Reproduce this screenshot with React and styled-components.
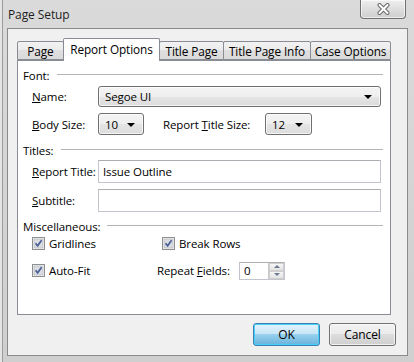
import React from "react";
import styled, { createGlobalStyle } from "styled-components";

const GlobalStyle = createGlobalStyle`
  html, body {
    margin: 0;
    padding: 0;
  }
  body {
    width: 414px;
    height: 362px;
    overflow: hidden;
    background: #d2d2d2;
    font-family: "Open Sans", "Noto Sans", sans-serif;
    font-size: 11.5px;
    letter-spacing: -0.1px;
    color: #000;
  }
`;

const Window = styled.div`
  width: 414px;
  height: 362px;
  box-sizing: border-box;
  display: flex;
  flex-direction: column;
  background: linear-gradient(#dadada, #cfcfcf);
  box-shadow: inset 2px 0 0 #e4e4e4, inset 3px 0 0 #9c9c9c;
`;

const TitleBar = styled.div`
  height: 28px;
  display: flex;
  align-items: flex-start;
  justify-content: space-between;
  padding-left: 8px;
  box-sizing: border-box;

  .title {
    margin-top: 6px;
    font-size: 12px;
    color: #1e1e1e;
  }
`;

const CloseButton = styled.div`
  width: 46px;
  height: 19px;
  margin-right: 8px;
  box-sizing: border-box;
  border: 1px solid #707070;
  border-top: none;
  border-radius: 0 0 4px 4px;
  background: linear-gradient(#efefef, #dcdcdc 55%, #cfcfcf);
  box-shadow: inset 0 0 0 1px rgba(255, 255, 255, 0.6);
  display: flex;
  align-items: center;
  justify-content: center;
`;

const Client = styled.div`
  margin: 0 6px 6px 7px;
  border: 1px solid #8a8a8a;
  background: #f0f0f0;
  padding: 9px 11px 9px 9px;
  display: flex;
  flex-direction: column;
`;

const TabControl = styled.div`
  margin-right: 5px;
  display: flex;
  flex-direction: column;
`;

const TabStrip = styled.div`
  height: 22px;
  display: flex;
  align-items: flex-end;
  position: relative;
  z-index: 1;
`;

const Tab = styled.div`
  width: ${(p) => p.$w}px;
  height: ${(p) => (p.$active ? 23 : 19)}px;
  margin-bottom: ${(p) => (p.$active ? -1 : 0)}px;
  box-sizing: border-box;
  border: 1px solid #898c95;
  border-bottom: ${(p) => (p.$active ? "none" : "1px solid #898c95")};
  margin-left: ${(p) => (p.$first ? 0 : -1)}px;
  border-radius: 2px 2px 0 0;
  background: ${(p) =>
    p.$active ? "#fff" : "linear-gradient(#f2f2f2, #ebebeb 50%, #dfdfdf 50%, #dadada)"};
  display: flex;
  justify-content: center;
  padding-top: ${(p) => (p.$active ? 2 : 1)}px;
  font-size: 11.8px;
  white-space: nowrap;
`;

const Panel = styled.div`
  height: 255px;
  box-sizing: border-box;
  border: 1px solid #898c95;
  background: #fff;
  padding: 7px 7px 0 5px;
  display: flex;
  flex-direction: column;
`;

const GroupHeader = styled.div`
  height: 14px;
  margin-top: ${(p) => p.$mt || 0}px;
  display: flex;
  align-items: center;

  &::after {
    content: "";
    flex: 1;
    height: 1px;
    margin-left: 7px;
    margin-top: -1px;
    background: #b4b4b4;
  }
`;

const Row = styled.div`
  height: ${(p) => p.$h}px;
  margin-top: ${(p) => p.$mt}px;
  padding-left: 9px;
  padding-right: 2px;
  display: flex;
  align-items: center;
`;

const Label = styled.span`
  width: ${(p) => p.$w}px;
  margin-left: ${(p) => p.$ml || 0}px;
  flex-shrink: 0;
  white-space: nowrap;
`;

const Select = styled.div`
  ${(p) => (p.$w ? `width: ${p.$w}px;` : "flex: 1;")}
  height: ${(p) => p.$h || 21}px;
  box-sizing: border-box;
  border: 1px solid #707070;
  border-radius: 3px;
  background: linear-gradient(#f4f4f4, #eeeeee 50%, #e5e5e5 50%, #dcdcdc);
  box-shadow: inset 0 0 0 1px rgba(255, 255, 255, 0.7);
  display: flex;
  align-items: center;
  justify-content: space-between;
  padding: 0 8px 0 6px;

  &::after {
    content: "";
    border-left: 4px solid transparent;
    border-right: 4px solid transparent;
    border-top: 4px solid #000;
    margin-top: 1px;
  }
`;

const TextBox = styled.input`
  flex: 1;
  height: 23px;
  box-sizing: border-box;
  border: 1px solid #c2c6cc;
  border-top-color: #abadb3;
  background: #fff;
  padding: 0 4px;
  font: inherit;
  letter-spacing: inherit;
  color: #000;
  outline: none;
`;

const CheckGrid = styled.div`
  display: grid;
  grid-template-columns: 125px 1fr;
  padding-left: 9px;
`;

const CheckLabel = styled.div`
  height: ${(p) => p.$h}px;
  margin-top: ${(p) => p.$mt || 0}px;
  padding-left: ${(p) => p.$pl || 0}px;
  display: flex;
  align-items: center;
  gap: 4px;
  white-space: nowrap;
`;

const Spin = styled.div`
  width: 46px;
  height: 18px;
  margin-left: ${(p) => p.$ml}px;
  box-sizing: border-box;
  border: 1px solid #c2c6cc;
  border-top-color: #abadb3;
  background: #fff;
  display: flex;
  align-items: center;
  justify-content: space-between;
  padding-left: 4px;
`;

const SpinButtons = styled.div`
  width: 16px;
  height: 16px;
  display: flex;
  flex-direction: column;
  border-left: 1px solid #c8c8c8;
  box-sizing: border-box;
`;

const SpinHalf = styled.div`
  flex: 1;
  background: linear-gradient(#f6f6f6, #e3e3e3);
  border: 1px solid #cfcfcf;
  display: flex;
  align-items: center;
  justify-content: center;

  &::after {
    content: "";
    border-left: 3px solid transparent;
    border-right: 3px solid transparent;
    ${(p) => (p.$up ? "border-bottom: 3px solid #6a7890;" : "border-top: 3px solid #6a7890;")}
  }
`;

const ButtonRow = styled.div`
  margin-top: 8px;
  display: flex;
  justify-content: flex-end;
  gap: 9px;
`;

const Button = styled.div`
  width: 67px;
  height: 23px;
  box-sizing: border-box;
  border-radius: 3px;
  font-size: 12px;
  border: 1px solid ${(p) => (p.$default ? "#3c7fb1" : "#707070")};
  background: ${(p) =>
    p.$default
      ? "linear-gradient(#e5f4fc, #c4e5f6 50%, #98d1ef 50%, #68b3db)"
      : "linear-gradient(#f2f2f2, #ebebeb 50%, #dddddd 50%, #cfcfcf)"};
  box-shadow: ${(p) =>
    p.$default ? "inset 0 0 0 1px #48d0fa" : "inset 0 0 0 1px rgba(255,255,255,0.7)"};
  display: flex;
  align-items: center;
  justify-content: center;
`;

const CloseGlyph = () => (
  <svg width="13" height="12" viewBox="0 0 13 12">
    <path d="M2.5 2 L10.5 10 M10.5 2 L2.5 10" stroke="#6b6b6b" strokeWidth="4" strokeLinecap="round" />
    <path d="M2.5 2 L10.5 10 M10.5 2 L2.5 10" stroke="#ffffff" strokeWidth="2" strokeLinecap="round" />
  </svg>
);

const CheckBox = () => (
  <svg width="13" height="13" viewBox="0 0 13 13">
    <rect x="0.5" y="0.5" width="12" height="12" fill="#f4f4f4" stroke="#8e8f8f" />
    <rect x="2" y="2" width="9" height="9" fill="#dadde2" stroke="#aeb3b9" strokeWidth="0.6" />
    <path d="M3.5 6.3 L5.6 8.8 L9.6 3.2" fill="none" stroke="#4a5f97" strokeWidth="1.7" />
  </svg>
);

const tabs = [
  { name: "Page", w: 47 },
  { name: "Report Options", w: 97, active: true },
  { name: "Title Page", w: 65 },
  { name: "Title Page Info", w: 88 },
  { name: "Case Options", w: 81 },
];

const App = () => {
  return (
    <Window>
      <GlobalStyle />
      <TitleBar>
        <span className="title">Page Setup</span>
        <CloseButton>
          <CloseGlyph />
        </CloseButton>
      </TitleBar>
      <Client>
        <TabControl>
          <TabStrip>
            {tabs.map((t, i) => (
              <Tab key={t.name} $w={t.w} $active={t.active} $first={i === 0}>
                {t.name}
              </Tab>
            ))}
          </TabStrip>
          <Panel>
            <GroupHeader>Font:</GroupHeader>
            <Row $h={21} $mt={4}>
              <Label $w={66}>
                <u>N</u>ame:
              </Label>
              <Select>Segoe UI</Select>
            </Row>
            <Row $h={22} $mt={6}>
              <Label $w={66}>
                <u>B</u>ody Size:
              </Label>
              <Select $w={46} $h={22}>10</Select>
              <Label $w={102} $ml={19}>
                Report <u>T</u>itle Size:
              </Label>
              <Select $w={47} $h={22}>12</Select>
            </Row>
            <GroupHeader $mt={8}>Titles:</GroupHeader>
            <Row $h={23} $mt={3}>
              <Label $w={66}>
                <u>R</u>eport Title:
              </Label>
              <TextBox readOnly value="Issue Outline" />
            </Row>
            <Row $h={23} $mt={6}>
              <Label $w={66}>
                <u>S</u>ubtitle:
              </Label>
              <TextBox readOnly value="" />
            </Row>
            <GroupHeader $mt={7}>Miscellaneous:</GroupHeader>
            <CheckGrid>
              <CheckLabel $h={13} $mt={4}>
                <CheckBox />
                Gridlines
              </CheckLabel>
              <CheckLabel $h={13} $mt={4} $pl={5}>
                <CheckBox />
                Break Rows
              </CheckLabel>
              <CheckLabel $h={17} $mt={12}>
                <CheckBox />
                Auto-Fit
              </CheckLabel>
              <CheckLabel $h={17} $mt={12}>
                <Label $w={82}>
                  Repeat <u>F</u>ields:
                </Label>
                <Spin $ml={-4}>
                  0
                  <SpinButtons>
                    <SpinHalf $up />
                    <SpinHalf />
                  </SpinButtons>
                </Spin>
              </CheckLabel>
            </CheckGrid>
          </Panel>
        </TabControl>
        <ButtonRow>
          <Button $default>OK</Button>
          <Button>Cancel</Button>
        </ButtonRow>
      </Client>
    </Window>
  );
};

export default App;
